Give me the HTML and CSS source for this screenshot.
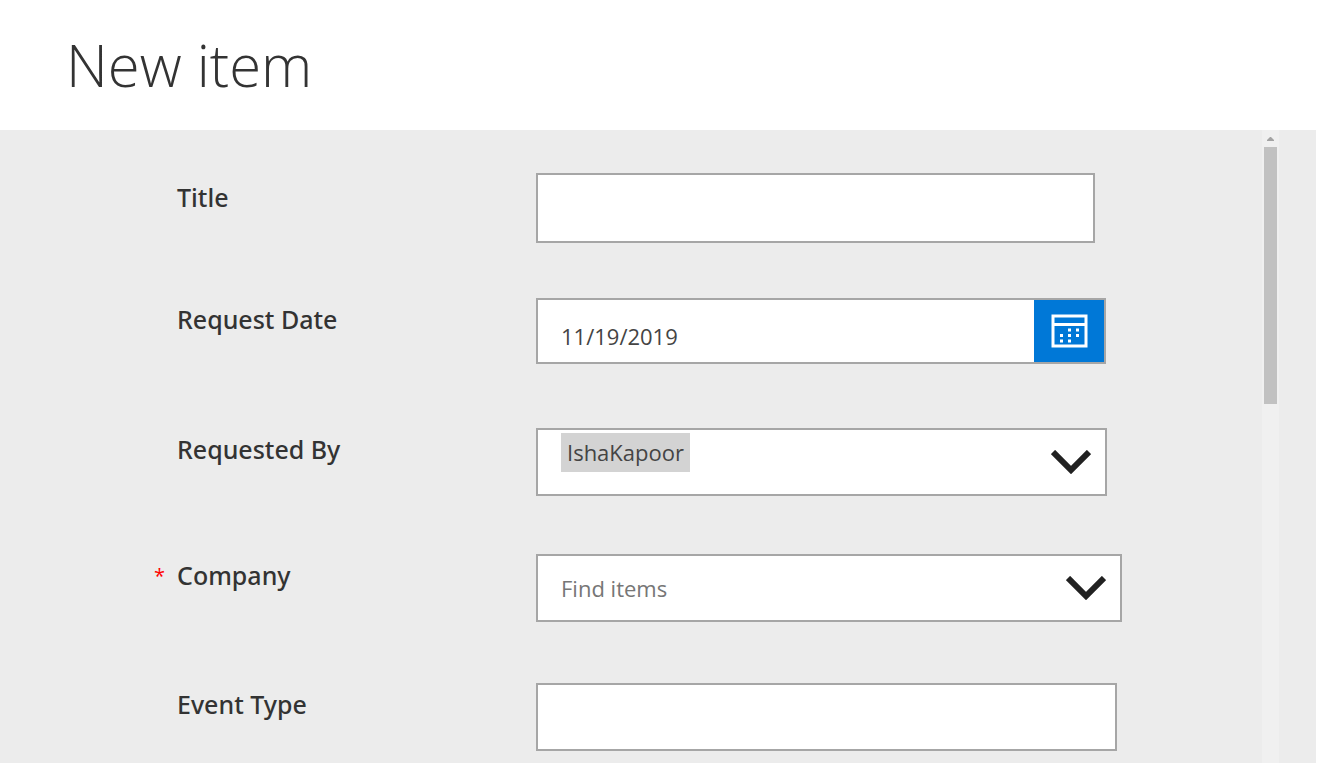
FILE: index.html
```html
<!DOCTYPE html>
<html lang="en">
<head>
<meta charset="utf-8">
<title>New item</title>
<link rel="stylesheet" href="styles.css">
</head>
<body>
<header class="header"><h1 class="heading">New item</h1></header>
<main class="panel">
  <form class="form">
    <div class="row row-title">
      <label class="label" for="title">Title</label>
      <div class="field"><input class="input" id="title" type="text"></div>
    </div>
    <div class="row row-date">
      <label class="label" for="date">Request Date</label>
      <div class="field">
        <input class="input" id="date" type="text" value="11/19/2019">
        <button class="date-button" type="button" aria-label="Open calendar">
          <svg class="calendar" viewBox="0 0 37 34" width="37" height="34" aria-hidden="true">
            <path d="M2 2H35V32H2ZM2 10.5H35" fill="none" stroke="#fff" stroke-width="3"/>
            <path d="M17 14.500h3v3h-3zM25 14.500h3v3h-3zM9 20h3v3H9zM17 20h3v3h-3zM25 20h3v3h-3zM9 25.500h3v3H9zM17 25.500h3v3h-3z" fill="#fff"/>
          </svg>
        </button>
      </div>
    </div>
    <div class="row row-requester">
      <label class="label" for="requester">Requested By</label>
      <div class="field">
        <span class="token">IshaKapoor</span>
        <input class="input input-rest" id="requester" type="text">
        <button class="drop" type="button" aria-label="Show people">
          <svg class="chevron" viewBox="0 0 40 24" width="40" height="24" aria-hidden="true"><path d="M2 2L20 20L38 2" fill="none" stroke="#212121" stroke-width="6"/></svg>
        </button>
      </div>
    </div>
    <div class="row row-company">
      <span class="required" aria-hidden="true">*</span>
      <label class="label" for="company">Company</label>
      <div class="field">
        <input class="input" id="company" type="text" placeholder="Find items" required>
        <button class="drop" type="button" aria-label="Show companies">
          <svg class="chevron" viewBox="0 0 40 24" width="40" height="24" aria-hidden="true"><path d="M2 2L20 20L38 2" fill="none" stroke="#212121" stroke-width="6"/></svg>
        </button>
      </div>
    </div>
    <div class="row row-event">
      <label class="label" for="event">Event Type</label>
      <div class="field"><input class="input" id="event" type="text"></div>
    </div>
  </form>
  <div class="scrollbar" aria-hidden="true">
    <svg class="scroll-arrow" viewBox="0 0 7 4" width="7" height="4"><path d="M0 4V3L3 0H4L7 3V4Z" fill="#a3a3a3"/></svg>
    <div class="scroll-thumb"></div>
  </div>
</main>
</body>
</html>
```
FILE: styles.css
```css
* { box-sizing: border-box; }

body {
  display: flex;
  flex-direction: column;
  height: 100vh;
  margin: 0;
  overflow: hidden;
  background: #fff;
  color: #333;
  font-family: "Open Sans", "Noto Sans", sans-serif;
}

.header {
  flex: none;
  padding: 25px 66px;
}

.heading {
  margin: 0;
  font-size: 58px;
  font-weight: 300;
  line-height: 80px;
}

.panel {
  display: flex;
  flex: 1;
  min-height: 0;
  margin-right: 15px;
  padding-right: 37px;
  background: #ececec;
}

.form {
  display: flex;
  flex: 1;
  flex-direction: column;
  gap: 60px;
  padding: 43px 140px 0 154px;
  overflow: hidden;
}

.row {
  display: grid;
  flex: none;
  grid-template-columns: 23px 359px 1fr;
  align-items: start;
}

.label {
  grid-column: 2;
  padding-top: 3px;
  font-family: "Noto Sans", sans-serif;
  font-size: 25px;
  font-weight: 500;
  line-height: 36px;
}

.required {
  grid-column: 1;
  padding-top: 4px;
  color: #f00;
  font-size: 20px;
  line-height: 36px;
}

.field {
  display: flex;
  grid-column: 3;
  height: 68px;
  border: 2px solid #a6a6a6;
  background: #fff;
}

.row-title { margin-bottom: -5px; }
.row-title .label { padding-top: 6px; }
.row-title .field { height: 70px; margin-right: 27px; }
.row-date { margin-bottom: 4px; }
.row-date .field { height: 66px; margin-right: 16px; }
.row-date .input { padding-top: 10px; }
.row-requester { margin-bottom: -2px; }
.row-requester .field { margin-right: 15px; }
.row-event { margin-top: 1px; }
.row-event .field { margin-right: 5px; }

.input {
  flex: 1;
  min-width: 0;
  margin: 0;
  padding: 0 23px;
  border: 0;
  outline: 0;
  background: transparent;
  color: #444;
  font-family: "Open Sans", "Noto Sans", sans-serif;
  font-size: 22px;
}

.input::placeholder {
  color: #767676;
  opacity: 1;
}

.input-rest { padding: 0 8px; }

.date-button {
  display: flex;
  flex: none;
  align-items: center;
  justify-content: center;
  width: 70px;
  padding: 0;
  border: 0;
  background: #0078d7;
}

.token {
  align-self: flex-start;
  margin: 3px 0 0 23px;
  padding: 0 6px;
  background: #d3d3d3;
  color: #444;
  font-size: 22px;
  line-height: 39px;
}

.drop {
  display: flex;
  flex: none;
  align-items: center;
  justify-content: center;
  width: 68px;
  padding: 0;
  border: 0;
  background: transparent;
}

.scrollbar {
  display: flex;
  flex: none;
  flex-direction: column;
  align-items: center;
  gap: 6px;
  width: 17px;
  padding-top: 7px;
  background: #f0f0f0;
}

.scroll-arrow { flex: none; }

.scroll-thumb {
  width: 13px;
  height: 257px;
  background: #c1c1c1;
}
```
